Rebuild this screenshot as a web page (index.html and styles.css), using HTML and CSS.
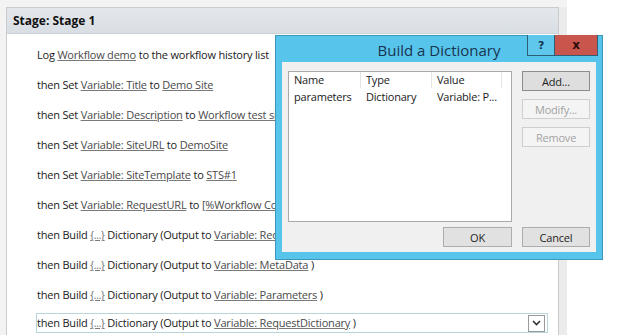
FILE: index.html
```html
<!DOCTYPE html>
<html>
<head>
<meta charset="utf-8">
<link rel="stylesheet" href="styles.css">
</head>
<body>
<div class="workspace">
  <div class="stage">
    <div class="stage-head">Stage: Stage 1</div>
    <div class="stage-body">
      <div class="row">Log <a>Workflow demo</a> to the workflow history list</div>
      <div class="row">then Set <a>Variable: Title</a> to <a>Demo Site</a></div>
      <div class="row">then Set <a>Variable: Description</a> to <a>Workflow test site</a></div>
      <div class="row">then Set <a>Variable: SiteURL</a> to <a>DemoSite</a></div>
      <div class="row">then Set <a>Variable: SiteTemplate</a> to <a>STS#1</a></div>
      <div class="row">then Set <a>Variable: RequestURL</a> to <a>[%Workflow Context:Current Site URL%]</a></div>
      <div class="row">then Build <a class="brace">{...}</a> Dictionary (Output to <a>Variable: RequestHeaders</a> )</div>
      <div class="row">then Build <a class="brace">{...}</a> Dictionary (Output to <a>Variable: MetaData</a> )</div>
      <div class="row">then Build <a class="brace">{...}</a> Dictionary (Output to <a>Variable: Parameters</a> )</div>
      <div class="row selected">
        <span>then Build <a class="brace">{...}</a> Dictionary (Output to <a>Variable: RequestDictionary</a> )</span>
        <span class="drop"><svg width="9" height="6" viewBox="0 0 9 6"><path d="M1 1 L4.5 4.5 L8 1" fill="none" stroke="#333" stroke-width="1.6"/></svg></span>
      </div>
    </div>
  </div>
  <div class="strip"></div>
</div>

<div class="dialog">
  <div class="titlebar">
    <span class="title">Build a Dictionary</span>
    <div class="caption-btns">
      <span class="cbtn help">?</span>
      <span class="cbtn close">x</span>
    </div>
  </div>
  <div class="client">
    <div class="listview">
      <div class="lv-head">
        <span class="c1">Name</span><span class="c2">Type</span><span class="c3">Value</span><span class="c4"></span>
      </div>
      <div class="lv-row">
        <span class="c1">parameters</span><span class="c2">Dictionary</span><span class="c3">Variable: P...</span>
      </div>
    </div>
    <div class="side-btns">
      <span class="btn default">Add...</span>
      <span class="btn disabled">Modify...</span>
      <span class="btn disabled">Remove</span>
    </div>
    <div class="bottom-btns">
      <span class="btn">OK</span>
      <span class="btn">Cancel</span>
    </div>
  </div>
</div>
</body>
</html>
```
FILE: styles.css
```css
html, body {
  margin: 0;
  padding: 0;
  background: #ffffff;
  width: 624px;
  height: 335px;
  overflow: hidden;
  font-family: "Open Sans", "Noto Sans", sans-serif;
  font-size: 11px;
  color: #1a1a1a;
}
.workspace {
  width: 567px;
  height: 335px;
  background: #f3f3f3;
  display: flex;
  padding: 7px 0 0 6px;
  box-sizing: border-box;
}
.stage {
  width: 553px;
  border: 1px solid #c9cbcd;
  border-bottom: none;
  background: #ffffff;
  box-sizing: border-box;
  overflow: hidden;
}
.strip {
  width: 8px;
  background: #ececec;
}
.stage-head {
  height: 25px;
  line-height: 25px;
  padding-left: 6px;
  font-weight: 700;
  font-size: 12px;
  color: #111;
  background: linear-gradient(#e4e8ec, #d9dee4);
  border-bottom: 1px solid #cdd2d8;
}
.stage-body {
  padding-top: 6px;
}
.row {
  height: 30px;
  line-height: 30px;
  padding-left: 30px;
  white-space: nowrap;
  letter-spacing: -0.2px;
}
.row a {
  color: #4a4a4a;
  text-decoration: underline;
  text-decoration-color: #7a7a7a;
}
.row a.brace {
  color: #6a6a6a;
  font-size: 10px;
}
.row.selected {
  margin-left: 29px;
  padding-left: 0;
  width: 512px;
  height: 20px;
  line-height: 18px;
  margin-top: 3px;
  border: 1px solid #b9d5dc;
  box-sizing: border-box;
  display: flex;
  justify-content: space-between;
  align-items: center;
}
.drop {
  width: 15px;
  height: 15px;
  border: 1px solid #9a9a9a;
  background: #fff;
  margin-right: 2px;
  display: flex;
  align-items: center;
  justify-content: center;
}

.dialog {
  position: absolute;
  left: 275px;
  top: 35px;
  width: 328px;
  height: 225px;
  box-sizing: border-box;
  background: #57c4eb;
  border: 1px solid #3c97ba;
  padding: 0 6px 7px 6px;
  display: flex;
  flex-direction: column;
  letter-spacing: -0.2px;
}
.titlebar {
  height: 26px;
  position: relative;
  display: flex;
  align-items: center;
  justify-content: center;
}
.title {
  font-size: 15px;
  color: #17354f;
  margin-top: 2px;
  letter-spacing: 0;
}
.caption-btns {
  position: absolute;
  right: -2px;
  top: -1px;
  display: flex;
  border: 1px solid #2f5f78;
  border-top: none;
}
.cbtn {
  height: 20px;
  display: flex;
  align-items: center;
  justify-content: center;
  font-weight: 700;
  font-family: "DejaVu Sans", sans-serif;
}
.help {
  width: 26px;
  background: #5fc6ec;
  color: #15344d;
  font-size: 11px;
  border-right: 1px solid #2f5f78;
}
.close {
  width: 42px;
  background: #c9564c;
  color: #2a0c0a;
  font-size: 12px;
}
.client {
  flex: 1;
  background: #f0f0f0;
  display: grid;
  grid-template-columns: 224px 68px;
  grid-template-rows: 151px auto;
  column-gap: 10px;
  row-gap: 5px;
  padding: 9px 6px 5px 6px;
}
.listview {
  background: #fff;
  border: 1px solid #a9a9a9;
  box-sizing: border-box;
}
.lv-head, .lv-row {
  display: flex;
  height: 16px;
  line-height: 16px;
}
.lv-head span {
  border-right: 1px solid #e3e3e3;
  box-sizing: border-box;
}
.lv-head .c4 { border-right: none; }
.lv-row { height: 17px; line-height: 17px; }
.c1, .c2, .c3 {
  padding-left: 5px;
  box-sizing: border-box;
}
.c1 { width: 72px; }
.c2 { width: 71px; }
.c3 { width: 70px; }
.c4 { flex: 1; }
.side-btns {
  display: flex;
  flex-direction: column;
  gap: 8px;
}
.btn {
  height: 20px;
  width: 68px;
  box-sizing: border-box;
  border: 1px solid #adadad;
  background: #e1e1e1;
  display: flex;
  align-items: center;
  justify-content: center;
  color: #1e1e1e;
}
.btn.default {
  border-color: #8c8c8c;
  background: #dedede;
}
.btn.disabled {
  background: #f4f4f4;
  border-color: #cfcfcf;
  color: #a3a3a3;
}
.bottom-btns {
  grid-column: 1 / span 2;
  display: flex;
  justify-content: flex-end;
  gap: 10px;
}
.bottom-btns .btn:first-child {
  width: 69px;
}
```
